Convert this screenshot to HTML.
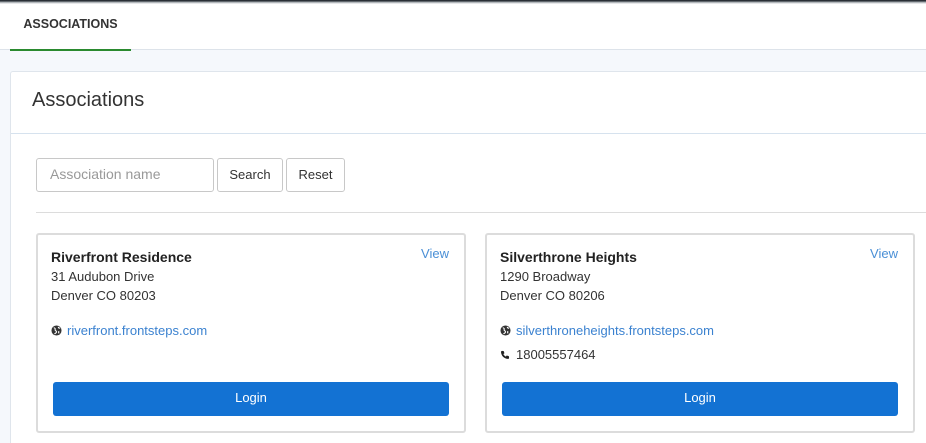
<!DOCTYPE html>
<html><head><style>
*{box-sizing:border-box;margin:0;padding:0}
html,body{width:926px;height:443px;overflow:hidden}
body{background:#f5f8fc;font-family:"Liberation Sans",Arial,sans-serif;color:#333;position:relative}
.topbar{position:absolute;left:0;top:0;width:926px;height:50px;background:#fff;border-bottom:1px solid #dde3ea}
.shadow{position:absolute;left:0;top:0;width:926px;height:4px;background:linear-gradient(#2a2f36,#2a2f36 1px,#9aa0a6 2px,#fff 4px)}
.tab{position:absolute;left:10px;top:0;width:121px;height:51px;border-bottom:2px solid #2a8a2f;font-size:12.5px;font-weight:bold;color:#333;text-align:center;line-height:48px}
.panel{position:absolute;left:10px;top:71px;width:916px;height:372px;background:#fff;border:1px solid #dfe5ec;border-right:none;border-bottom:none;border-radius:3px 0 0 0}
.ph{height:62px;border-bottom:1px solid #d6e2ee;padding-left:21px;font-size:20px;line-height:57px;color:#333}
.abs{position:absolute}
.inp{left:36px;top:158px;width:178px;height:34px;border:1px solid #c8c8c8;border-radius:3px;color:#999;font-size:14px;line-height:31px;padding-left:13px}
.btn{top:158px;height:34px;border:1px solid #c8c8c8;border-radius:3px;font-size:13px;line-height:31px;text-align:center;color:#333;background:#fff}
.hr{left:36px;top:212px;width:890px;height:1px;background:#dcdcdc}
.card{top:233px;width:430px;height:200px;border:2px solid #dcdcdc;border-radius:3px;background:#fff}
.card h3{position:absolute;left:13px;top:14px;font-size:14px;font-weight:bold;color:#222}
.card .a{position:absolute;left:13px;font-size:13px;color:#333}
.view{position:absolute;right:15px;top:11px;font-size:13px;color:#4a8fd6}
.link{position:absolute;left:13px;font-size:13px;color:#3b82d0}
.link svg{vertical-align:-1px;margin-right:5px}
.login{position:absolute;left:15px;top:147px;width:396px;height:34px;background:#1372d3;border-radius:3px;color:#fff;font-size:13px;text-align:center;line-height:32px}
</style></head><body>
<div class="topbar"><div class="tab">ASSOCIATIONS</div></div>
<div class="shadow"></div>
<div class="panel"><div class="ph">Associations</div></div>
<div class="abs inp">Association name</div>
<div class="abs btn" style="left:217px;width:66px">Search</div>
<div class="abs btn" style="left:286px;width:59px">Reset</div>
<div class="abs hr"></div>
<div class="abs card" style="left:36px">
<h3>Riverfront Residence</h3><div class="view">View</div>
<div class="a" style="top:34px">31 Audubon Drive</div>
<div class="a" style="top:53px">Denver CO 80203</div>
<div class="link" style="top:88px"><svg width="11" height="11" viewBox="0 0 12 12"><circle cx="6" cy="6" r="5.5" fill="#333"/><path d="M3 3c1 0 2 1 1.5 2S6 6 6 7.5 4 9 4 10M8 2c0 1 1 1.5 2 1.5M9 7c-1 0-1 1.5 0 2" stroke="#fff" stroke-width="1.2" fill="none"/></svg>riverfront.frontsteps.com</div>
<div class="login">Login</div>
</div>
<div class="abs card" style="left:485px">
<h3>Silverthrone Heights</h3><div class="view">View</div>
<div class="a" style="top:34px">1290 Broadway</div>
<div class="a" style="top:53px">Denver CO 80206</div>
<div class="link" style="top:88px"><svg width="11" height="11" viewBox="0 0 12 12"><circle cx="6" cy="6" r="5.5" fill="#333"/><path d="M3 3c1 0 2 1 1.5 2S6 6 6 7.5 4 9 4 10M8 2c0 1 1 1.5 2 1.5M9 7c-1 0-1 1.5 0 2" stroke="#fff" stroke-width="1.2" fill="none"/></svg>silverthroneheights.frontsteps.com</div>
<div class="a" style="top:112px"><svg width="10" height="10" viewBox="0 0 12 12" style="vertical-align:-1px;margin-right:6px"><path d="M2.5 1l2 .3.8 2.6-1.3 1a7 7 0 003 3l1-1.3 2.6.8.3 2c0 .8-.6 1.3-1.4 1.3C5 10.5 1.5 7 1.2 2.4 1.2 1.6 1.7 1 2.5 1z" fill="#222"/></svg>18005557464</div>
<div class="login">Login</div>
</div>
</body></html>
